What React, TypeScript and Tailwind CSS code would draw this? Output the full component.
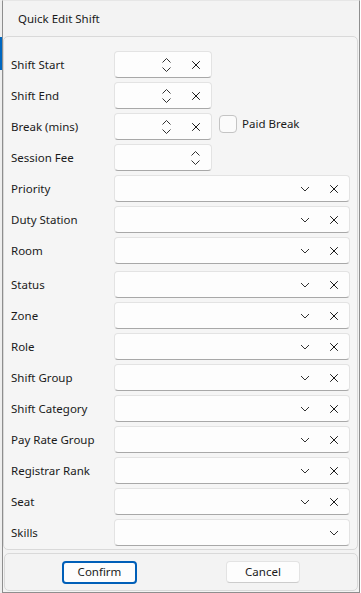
import React from "react";

const font = { fontFamily: '"Noto Sans", "Open Sans", sans-serif' };

function XIcon() {
  return (
    <svg width="10" height="10" viewBox="0 0 10 10" className="block">
      <path d="M1.2 1.2 L8.8 8.8 M8.8 1.2 L1.2 8.8" stroke="#1b1b1b" strokeWidth="1" fill="none" />
    </svg>
  );
}

function Chevron() {
  return (
    <svg width="10" height="6" viewBox="0 0 10 6" className="block">
      <path d="M1 1 L5 5 L9 1" stroke="#1b1b1b" strokeWidth="0.9" fill="none" />
    </svg>
  );
}

function Spin() {
  return (
    <svg width="11" height="16" viewBox="0 0 11 16" className="block">
      <path d="M1.5 5.5 L5.5 1.5 L9.5 5.5" stroke="#1b1b1b" strokeWidth="0.9" fill="none" />
      <path d="M1.5 10.5 L5.5 14.5 L9.5 10.5" stroke="#1b1b1b" strokeWidth="0.9" fill="none" />
    </svg>
  );
}

function Box({ wide, children }: { wide?: boolean; children: React.ReactNode }) {
  return (
    <div
      className={`${wide ? "w-[236px]" : "w-[98px]"} h-[27px] bg-[#fdfdfd] border border-[#e3e3e3] border-b-[#a8a8a8] rounded-[4px] flex items-center justify-end pr-[1px]`}
    >
      {children}
    </div>
  );
}

function Slot({ children }: { children: React.ReactNode }) {
  return <div className="w-[29px] h-full flex items-center justify-center">{children}</div>;
}

function Row({ label, children, extra }: { label: string; children: React.ReactNode; extra?: string }) {
  return (
    <div className={`flex items-center h-[27px] ${extra ?? ""}`}>
      <div className="w-[103px] text-[11.5px] text-[#1a1a1a] leading-none">{label}</div>
      {children}
    </div>
  );
}

export default function App() {
  const dropdowns1 = ["Priority", "Duty Station", "Room"];
  const dropdowns2 = [
    "Status",
    "Zone",
    "Role",
    "Shift Group",
    "Shift Category",
    "Pay Rate Group",
    "Registrar Rank",
    "Seat",
  ];
  return (
    <div className="w-[361px] h-[593px] bg-white flex" style={font}>
      <div className="w-[2px] h-full bg-[#eeeeee] flex flex-col">
        <div className="h-[37px]" />
        <div className="h-[33px] bg-[#0067c0]" />
      </div>
      <div className="w-[358px] h-[593px] bg-[#f3f3f3] border-l border-r border-b border-t border-l-[#8e8e8e] border-r-[#8e8e8e] border-b-[#8e8e8e] border-t-[#e6e6e6] flex flex-col">
        <div className="h-[35px] flex items-center pl-[15px] text-[11.5px] text-[#1a1a1a] shrink-0">
          Quick Edit Shift
        </div>
        <div className="mr-[1px] h-[514px] bg-[#f5f5f5] border border-[#d9d9d9] rounded-[5px] pl-[7px] pt-[14px] flex flex-col gap-[4px]">
          <Row label="Shift Start">
            <Box>
              <Slot><Spin /></Slot>
              <Slot><XIcon /></Slot>
            </Box>
          </Row>
          <Row label="Shift End">
            <Box>
              <Slot><Spin /></Slot>
              <Slot><XIcon /></Slot>
            </Box>
          </Row>
          <Row label="Break (mins)">
            <Box>
              <Slot><Spin /></Slot>
              <Slot><XIcon /></Slot>
            </Box>
            <div className="ml-[7px] flex items-center gap-[5px] mb-[6px]">
              <div className="w-[18px] h-[18px] rounded-[4px] border border-[#c4c4c4] bg-[#fbfbfb]" />
              <span className="text-[11.5px] text-[#1a1a1a]">Paid Break</span>
            </div>
          </Row>
          <Row label="Session Fee">
            <Box>
              <Slot><Spin /></Slot>
            </Box>
          </Row>
          {dropdowns1.map((l) => (
            <Row key={l} label={l}>
              <Box wide>
                <Slot><Chevron /></Slot>
                <Slot><XIcon /></Slot>
              </Box>
            </Row>
          ))}
          {dropdowns2.map((l, i) => (
            <Row key={l} label={l} extra={i === 0 ? "mt-[3px]" : ""}>
              <Box wide>
                <Slot><Chevron /></Slot>
                <Slot><XIcon /></Slot>
              </Box>
            </Row>
          ))}
          <Row label="Skills">
            <Box wide>
              <Slot><Chevron /></Slot>
            </Box>
          </Row>
        </div>
        <div className="mt-[3px] ml-[1px] mr-[1px] h-[38px] bg-[#f3f3f3] border border-[#d9d9d9] rounded-[5px] flex items-center">
          <button className="ml-[57px] w-[75px] h-[23px] rounded-[4px] border-2 border-[#005fb8] bg-[#fdfdfd] text-[11.5px] text-[#1a1a1a] flex items-center justify-center">
            Confirm
          </button>
          <button className="ml-[89px] w-[74px] h-[22px] rounded-[4px] border border-[#e3e3e3] border-b-[#cccccc] bg-[#fdfdfd] text-[11.5px] text-[#1a1a1a] flex items-center justify-center">
            Cancel
          </button>
        </div>
      </div>
      <div className="w-[1px] h-full bg-white" />
    </div>
  );
}
